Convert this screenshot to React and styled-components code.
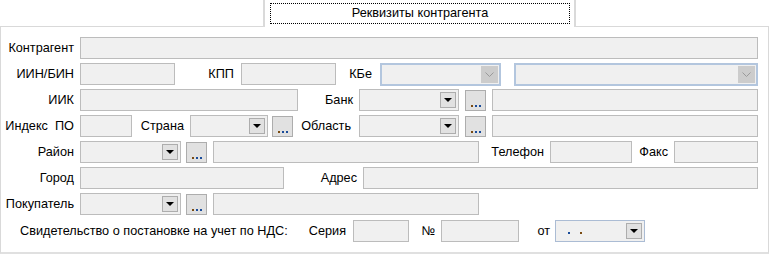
import React from "react";
import styled, { createGlobalStyle } from "styled-components";

const GlobalStyles = createGlobalStyle`
  body {
    margin: 0;
    padding: 0;
    background: #ffffff;
    font-family: "Segoe UI", "Liberation Sans", Arial, sans-serif;
    font-size: 12.7px;
    color: #000;
  }
`;

const Page = styled.div`
  width: 769px;
  height: 254px;
  display: flex;
  flex-direction: column;
`;

const TabStrip = styled.div`
  display: flex;
  height: 27px;
`;

const StripLine = styled.div`
  width: ${(p) => (p.$w ? `${p.$w}px` : "auto")};
  flex: ${(p) => (p.$w ? "none" : "1")};
  border-bottom: 1px solid #d9d9d9;
`;

const Tab = styled.div`
  box-sizing: border-box;
  width: 313px;
  border-left: 2px solid #dadada;
  border-right: 2px solid #dadada;
  background: #fff;
  padding: 3px 4px 3px 5px;
  display: flex;
`;

const TabFocus = styled.div`
  flex: 1;
  border: 1px dotted #000;
  display: flex;
  align-items: center;
  justify-content: center;
  padding-bottom: 1px;
`;

const Panel = styled.div`
  flex: 1;
  border: 1px solid #d9d9d9;
  border-top: none;
  border-bottom: 2px solid #e0e0e0;
  padding: 10px 0 0 0;
  display: flex;
  flex-direction: column;
  gap: 4px;
`;

const Row = styled.div`
  display: flex;
  align-items: center;
  height: 22px;
  margin-top: ${(p) => p.$mt || 0}px;
`;

const Label = styled.span`
  width: ${(p) => p.$w}px;
  margin-left: ${(p) => p.$ml || 0}px;
  text-align: ${(p) => p.$align || "right"};
  white-space: pre;
  flex: none;
  line-height: 22px;
`;

const Input = styled.div`
  box-sizing: border-box;
  width: ${(p) => p.$w}px;
  margin-left: ${(p) => p.$ml || 0}px;
  height: 22px;
  flex: none;
  background: #f0f0f0;
  border: 1px solid #bcbcbc;
`;

const Combo = styled.div`
  box-sizing: border-box;
  width: ${(p) => p.$w}px;
  margin-left: ${(p) => p.$ml || 0}px;
  height: 22px;
  flex: none;
  background: #f0f0f0;
  border: 1px solid ${(p) => (p.$blue ? "#abbcd4" : "#bcbcbc")};
  display: flex;
  align-items: center;
  justify-content: flex-end;
  padding: 2px;
  position: relative;
`;

const DropBtn = styled.div`
  box-sizing: border-box;
  width: 16px;
  height: 16px;
  background: #e1e1e1;
  border: 1px solid #adadad;
  display: flex;
  align-items: center;
  justify-content: center;
`;

const Arrow = styled.div`
  width: 0;
  height: 0;
  border-left: 4px solid transparent;
  border-right: 4px solid transparent;
  border-top: 4px solid #000;
`;

const DisabledCombo = styled.div`
  box-sizing: border-box;
  width: ${(p) => p.$w}px;
  margin-left: ${(p) => p.$ml || 0}px;
  height: 23px;
  flex: none;
  background: #f0f0f0;
  border: 2px solid #b3c6de;
  display: flex;
  justify-content: flex-end;
  padding: 1px;
`;

const DisabledDrop = styled.div`
  width: 17px;
  background: #cccccc;
  display: flex;
  align-items: center;
  justify-content: center;
`;

const DotsBtn = styled.div`
  box-sizing: border-box;
  width: ${(p) => p.$w || 21}px;
  margin-left: ${(p) => p.$ml || 0}px;
  height: 21px;
  flex: none;
  background: #e1e1e1;
  border: 1px solid #adadad;
  display: flex;
  align-items: flex-end;
  justify-content: center;
  padding-bottom: 3px;
  gap: 2px;
`;

const Dot = styled.span`
  width: 2px;
  height: 2px;
  background: ${(p) => p.$c};
`;

const DateText = styled.span`
  position: absolute;
  left: 12px;
  top: 11px;
  display: flex;
  gap: 10px;
`;

const Dots = () => (
  <>
    <Dot $c="#7a4a10" />
    <Dot $c="#1a4c9a" />
    <Dot $c="#1a4c9a" />
  </>
);

const Chevron = () => (
  <svg width="9" height="5" viewBox="0 0 9 5">
    <path d="M0.5 0.5 L4.5 4.5 L8.5 0.5" fill="none" stroke="#9a9a9a" strokeWidth="1" />
  </svg>
);

const DropCombo = ({ w, ml }) => (
  <Combo $w={w} $ml={ml}>
    <DropBtn>
      <Arrow />
    </DropBtn>
  </Combo>
);

const App = () => (
  <>
    <GlobalStyles />
    <Page>
      <TabStrip>
        <StripLine $w={263} />
        <Tab>
          <TabFocus>Реквизиты контрагента</TabFocus>
        </Tab>
        <StripLine />
      </TabStrip>
      <Panel>
        <Row>
          <Label $w={73}>Контрагент</Label>
          <Input $ml={6} $w={678} />
        </Row>
        <Row>
          <Label $w={73}>ИИН/БИН</Label>
          <Input $ml={6} $w={95} />
          <Label $w={59}>КПП</Label>
          <Input $ml={7} $w={95} />
          <Label $w={36}>КБе</Label>
          <DisabledCombo $ml={8} $w={121}>
            <DisabledDrop>
              <Chevron />
            </DisabledDrop>
          </DisabledCombo>
          <DisabledCombo $ml={13} $w={244}>
            <DisabledDrop>
              <Chevron />
            </DisabledDrop>
          </DisabledCombo>
        </Row>
        <Row>
          <Label $w={73}>ИИК</Label>
          <Input $ml={6} $w={218} />
          <Label $w={55}>Банк</Label>
          <DropCombo ml={6} w={100} />
          <DotsBtn $ml={6}>
            <Dots />
          </DotsBtn>
          <Input $ml={6} $w={266} />
        </Row>
        <Row>
          <Label $w={73}>{"Индекс  ПО"}</Label>
          <Input $ml={6} $w={52} />
          <Label $w={52}>Страна</Label>
          <DropCombo ml={6} w={78} />
          <DotsBtn $ml={4}>
            <Dots />
          </DotsBtn>
          <Label $w={58}>Область</Label>
          <DropCombo ml={8} w={100} />
          <DotsBtn $ml={6}>
            <Dots />
          </DotsBtn>
          <Input $ml={6} $w={266} />
        </Row>
        <Row>
          <Label $w={73}>Район</Label>
          <DropCombo ml={6} w={101} />
          <DotsBtn $ml={5}>
            <Dots />
          </DotsBtn>
          <Input $ml={6} $w={266} />
          <Label $w={65}>Телефон</Label>
          <Input $ml={6} $w={82} />
          <Label $w={36}>Факс</Label>
          <Input $ml={6} $w={84} />
        </Row>
        <Row>
          <Label $w={73}>Город</Label>
          <Input $ml={6} $w={204} />
          <Label $w={73}>Адрес</Label>
          <Input $ml={6} $w={395} />
        </Row>
        <Row>
          <Label $w={73}>Покупатель</Label>
          <DropCombo ml={6} w={101} />
          <DotsBtn $ml={5}>
            <Dots />
          </DotsBtn>
          <Input $ml={6} $w={266} />
        </Row>
        <Row $mt={1}>
          <Label $w={270} $ml={19} $align="left">
            Свидетельство о постановке на учет по НДС:
          </Label>
          <Label $w={56}>Серия</Label>
          <Input $ml={7} $w={56} />
          <Label $w={26}>№</Label>
          <Input $ml={6} $w={78} />
          <Label $w={31}>от</Label>
          <Combo $ml={5} $w={90} $blue>
            <DateText>
              <Dot $c="#1a4c9a" />
              <Dot $c="#7a4a10" />
            </DateText>
            <DropBtn>
              <Arrow />
            </DropBtn>
          </Combo>
        </Row>
      </Panel>
    </Page>
  </>
);

export default App;
